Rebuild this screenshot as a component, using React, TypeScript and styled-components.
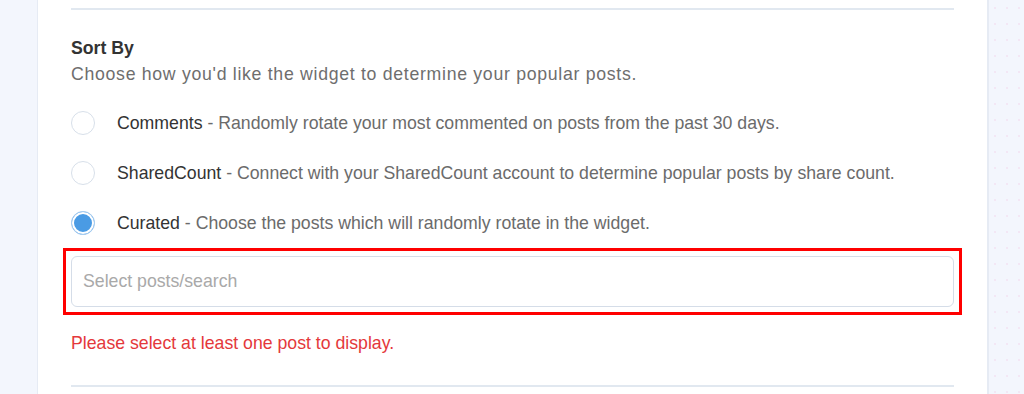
import styled, { createGlobalStyle } from "styled-components";

const GlobalStyle = createGlobalStyle`
  html, body {
    margin: 0;
    padding: 0;
    background: #ffffff;
    font-family: "Liberation Sans", Arial, sans-serif;
  }
  * { box-sizing: border-box; }
`;

const Page = styled.div`
  display: flex;
  height: 394px;
  overflow: hidden;
`;

const SideStrip = styled.div<{ $side: "left" | "right" }>`
  flex: 0 0 ${(p) => (p.$side === "left" ? "38px" : "37px")};
  background-color: #f3f6fd;
  ${(p) =>
    p.$side === "right"
      ? `
    background-image: radial-gradient(circle, rgba(240, 200, 226, 0.45) 0.6px, transparent 1px);
    background-size: 12px 16px;
    border-left: 2px solid #e6ebf4;
  `
      : "border-right: 1px solid #e6ebf4;"}
`;

const Card = styled.main`
  flex: 1;
  background: #ffffff;
  padding: 8px 33px 0;
`;

const Divider = styled.hr`
  margin: 0;
  border: 0;
  border-top: 2px solid #e1e8f0;
`;

const Section = styled.section`
  padding: 25px 0 30px;
`;

const Title = styled.h3`
  margin: 0;
  font-size: 17.7px;
  line-height: 26px;
  font-weight: 700;
  color: #333333;
`;

const Hint = styled.p`
  margin: 0;
  font-size: 17.7px;
  line-height: 26px;
  letter-spacing: 0.7px;
  color: #6e6e6e;
`;

const Options = styled.div`
  display: flex;
  flex-direction: column;
  gap: 26px;
  margin-top: 24px;
`;

const Option = styled.label`
  display: flex;
  align-items: center;
  gap: 22px;
  height: 24px;
  font-size: 17.7px;
  color: #6b6b6b;
`;

const Radio = styled.span<{ $checked?: boolean }>`
  flex: 0 0 24px;
  width: 24px;
  height: 24px;
  border-radius: 50%;
  border: 1px solid ${(p) => (p.$checked ? "#a9cdf0" : "#d8e0ea")};
  background: ${(p) => (p.$checked ? "#4a9be4" : "#ffffff")};
  box-shadow: ${(p) => (p.$checked ? "inset 0 0 0 2px #ffffff" : "none")};
`;

const OptionName = styled.span`
  color: #333333;
`;

const Highlight = styled.div`
  margin: 13px -8px 0 -8px;
  border: 3px solid #ff0000;
  padding: 5px;
`;

const SearchInput = styled.input`
  display: block;
  width: 100%;
  height: 51px;
  padding: 0 11px;
  border: 1px solid #d5dde8;
  border-radius: 6px;
  font-family: "Liberation Sans", Arial, sans-serif;
  font-size: 17.7px;
  color: #333333;
  outline: none;
  &::placeholder {
    color: #a9a9a9;
  }
`;

const ErrorText = styled.p`
  margin: 16px 0 0;
  font-size: 17.7px;
  line-height: 24px;
  color: #e4383b;
`;

const options = [
  {
    name: "Comments",
    text: "Randomly rotate your most commented on posts from the past 30 days.",
  },
  {
    name: "SharedCount",
    text: "Connect with your SharedCount account to determine popular posts by share count.",
  },
  {
    name: "Curated",
    text: "Choose the posts which will randomly rotate in the widget.",
    checked: true,
  },
];

export default function App() {
  return (
    <>
      <GlobalStyle />
      <Page>
        <SideStrip $side="left" />
        <Card>
          <Divider />
          <Section>
            <Title>Sort By</Title>
            <Hint>Choose how you'd like the widget to determine your popular posts.</Hint>
            <Options>
              {options.map((o) => (
                <Option key={o.name}>
                  <Radio $checked={o.checked} />
                  <span>
                    <OptionName>{o.name}</OptionName> - {o.text}
                  </span>
                </Option>
              ))}
            </Options>
            <Highlight>
              <SearchInput placeholder="Select posts/search" />
            </Highlight>
            <ErrorText>Please select at least one post to display.</ErrorText>
          </Section>
          <Divider />
        </Card>
        <SideStrip $side="right" />
      </Page>
    </>
  );
}
